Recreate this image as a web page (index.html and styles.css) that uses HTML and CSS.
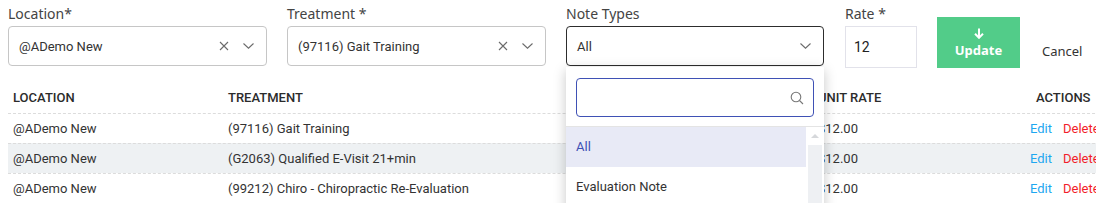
FILE: index.html
```html
<!DOCTYPE html>
<html>
<head>
<meta charset="utf-8">
<link rel="stylesheet" href="styles.css">
</head>
<body>
<div class="form">
  <div class="field f-loc">
    <label class="lbl">Location*</label>
    <div class="select">
      <span class="val">@ADemo New</span>
      <svg class="ico-x" width="10" height="10" viewBox="0 0 10 10"><path d="M1 1L9 9M9 1L1 9" stroke="#6b6b6b" stroke-width="1.1" fill="none"/></svg>
      <svg class="ico-chev" width="11" height="6" viewBox="0 0 11 6"><path d="M0.5 0.5L5.5 5.2L10.5 0.5" stroke="#6b6b6b" stroke-width="1.1" fill="none"/></svg>
    </div>
  </div>
  <div class="field f-treat">
    <label class="lbl">Treatment *</label>
    <div class="select">
      <span class="val">(97116) Gait Training</span>
      <svg class="ico-x" width="10" height="10" viewBox="0 0 10 10"><path d="M1 1L9 9M9 1L1 9" stroke="#6b6b6b" stroke-width="1.1" fill="none"/></svg>
      <svg class="ico-chev" width="11" height="6" viewBox="0 0 11 6"><path d="M0.5 0.5L5.5 5.2L10.5 0.5" stroke="#6b6b6b" stroke-width="1.1" fill="none"/></svg>
    </div>
  </div>
  <div class="field f-note">
    <label class="lbl">Note Types</label>
    <div class="select focused">
      <span class="val">All</span>
      <svg class="ico-chev" width="11" height="6" viewBox="0 0 11 6"><path d="M0.5 0.5L5.5 5.2L10.5 0.5" stroke="#6b6b6b" stroke-width="1.1" fill="none"/></svg>
    </div>
    <div class="dropdown">
      <div class="search-wrap">
        <div class="search">
          <svg width="14" height="14" viewBox="0 0 14 14"><circle cx="6" cy="6" r="4.8" stroke="#777" stroke-width="1.1" fill="none"/><path d="M9.5 9.5L13 13" stroke="#777" stroke-width="1.1"/></svg>
        </div>
      </div>
      <div class="opts">
        <div class="list">
          <div class="opt active">All</div>
          <div class="opt">Evaluation Note</div>
        </div>
        <div class="scroll">
          <div class="sc-arrow"></div>
          <div class="sc-track"></div>
        </div>
      </div>
    </div>
  </div>
  <div class="field f-rate">
    <label class="lbl">Rate *</label>
    <div class="rate-input">12</div>
  </div>
  <button class="btn-update">
    <svg width="10" height="11" viewBox="0 0 10 11"><path d="M5 0.5V9.5M1 5.8L5 9.8L9 5.8" stroke="#fff" stroke-width="2" fill="none"/></svg>
    <span>Update</span>
  </button>
  <button class="btn-cancel">Cancel</button>
</div>

<div class="table">
  <div class="row head">
    <div class="c c1">LOCATION</div>
    <div class="c c2">TREATMENT</div>
    <div class="c c3">UNIT RATE</div>
    <div class="c c4 hact">ACTIONS</div>
  </div>
  <div class="row">
    <div class="c c1">@ADemo New</div>
    <div class="c c2">(97116) Gait Training</div>
    <div class="c c3">$12.00</div>
    <div class="c c4"><span class="edit">Edit</span><span class="del">Delete</span></div>
  </div>
  <div class="row alt">
    <div class="c c1">@ADemo New</div>
    <div class="c c2">(G2063) Qualified E-Visit 21+min</div>
    <div class="c c3">$12.00</div>
    <div class="c c4"><span class="edit">Edit</span><span class="del">Delete</span></div>
  </div>
  <div class="row">
    <div class="c c1">@ADemo New</div>
    <div class="c c2">(99212) Chiro - Chiropractic Re-Evaluation</div>
    <div class="c c3">$12.00</div>
    <div class="c c4"><span class="edit">Edit</span><span class="del">Delete</span></div>
  </div>
</div>
</body>
</html>
```

FILE: styles.css
```css
html, body {
  overflow: hidden;
}
body {
  margin: 0;
  padding: 0 0 0 8px;
  width: 1130px;
  background: #fff;
  font-family: Roboto, "Liberation Sans", sans-serif;
  color: #333;
}
.form {
  display: flex;
  align-items: flex-start;
  gap: 20px;
  padding-top: 5px;
  height: 63px;
}
.field {
  position: relative;
  display: flex;
  flex-direction: column;
}
.lbl {
  font-family: "Noto Sans", "Open Sans", sans-serif;
  font-size: 14px;
  line-height: 18px;
  height: 21px;
  color: #444;
  white-space: nowrap;
}
.f-loc, .f-treat { width: 259px; }
.f-note { width: 258px; margin-right: 1px; }
.select {
  box-sizing: border-box;
  height: 40px;
  border: 1px solid #c6c6c6;
  border-radius: 4px;
  display: flex;
  align-items: center;
  padding: 0 12px 0 10px;
  font-size: 13px;
  color: #333;
}
.select.focused {
  border-color: #2d2d2d;
}
.val { flex: 1; }
.ico-x { margin-right: 14px; }
.dropdown {
  position: absolute;
  left: 0;
  top: 62px;
  width: 258px;
  height: 160px;
  background: #fff;
  box-shadow: 0 3px 12px rgba(0,0,0,0.22);
  z-index: 5;
}
.search-wrap {
  padding: 11px 10px 9px 10px;
  border-bottom: 1px solid #e4e4e4;
}
.search {
  box-sizing: border-box;
  height: 39px;
  border: 1.5px solid #3f51b5;
  border-radius: 4px;
  display: flex;
  align-items: center;
  justify-content: flex-end;
  padding-right: 9px;
}
.opts {
  display: flex;
}
.list { flex: 1; }
.opt {
  height: 40px;
  line-height: 40px;
  padding-left: 10px;
  font-size: 13px;
  color: #333;
}
.opt.active {
  background: #e8eaf6;
  color: #3f51b5;
}
.scroll {
  width: 14px;
  margin: 0 2px 0 2px;
  display: flex;
  flex-direction: column;
}
.sc-arrow {
  height: 18px;
  position: relative;
}
.sc-arrow::after {
  content: "";
  position: absolute;
  left: 3px;
  top: 7px;
  border-left: 4px solid transparent;
  border-right: 4px solid transparent;
  border-bottom: 4px solid #d6d8db;
}
.sc-track {
  flex: 1;
  background: #eef0f3;
}
.f-rate { width: 72px; }
.rate-input {
  box-sizing: border-box;
  height: 42px;
  border: 1px solid #e2e2ea;
  padding-left: 8px;
  display: flex;
  align-items: center;
  font-size: 14px;
  color: #222;
}
.btn-update {
  margin-top: 12px;
  width: 83px;
  height: 51px;
  border: none;
  background: #52cc89;
  color: #fff;
  font-family: "Noto Sans", "Open Sans", sans-serif;
  font-weight: 700;
  font-size: 13px;
  display: flex;
  flex-direction: column;
  align-items: center;
  justify-content: center;
  gap: 2px;
  padding: 2px 0 0 0;
}
.btn-cancel {
  margin-top: 12px;
  margin-left: 2px;
  height: 51px;
  border: none;
  background: none;
  font-family: "Noto Sans", "Open Sans", sans-serif;
  font-size: 13px;
  color: #333;
  padding: 16px 0 0 0;
}
.table {
  margin-top: 13px;
  width: 1122px;
}
.row {
  box-sizing: border-box;
  display: grid;
  grid-template-columns: 215px 590px 212px 105px;
  height: 30px;
  align-items: center;
  border-top: 1px dashed #dcdcdc;
  font-size: 13px;
  color: #333;
}
.row.head {
  height: 32px;
  border-top: none;
  font-weight: 500;
  color: #2b2b2b;
}
.row.alt { background: #eef1f3; }
.c { padding-left: 5px; white-space: nowrap; }
.hact { padding-left: 11px; }
.edit { color: #1ea7f0; margin-right: 11px; }
.del { color: #f21d2a; }
```
